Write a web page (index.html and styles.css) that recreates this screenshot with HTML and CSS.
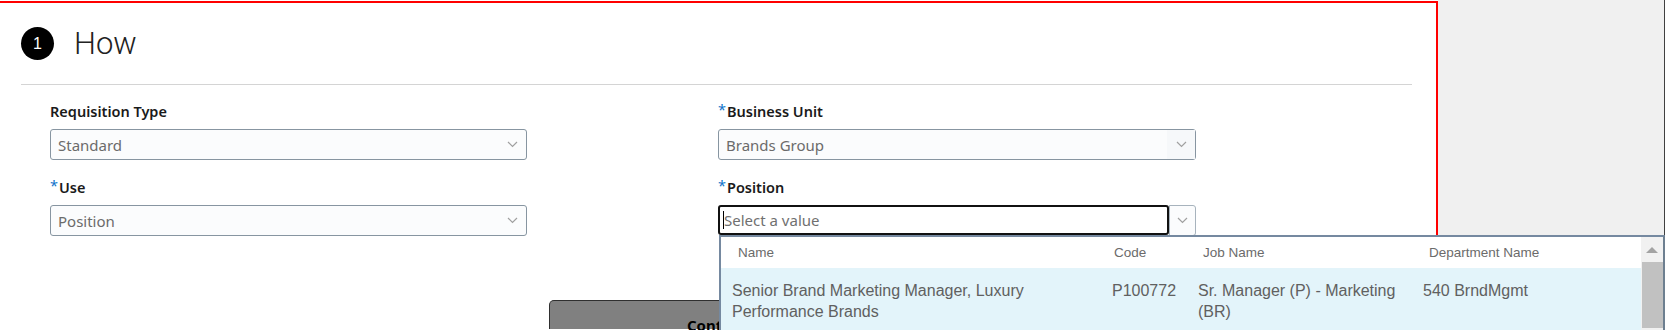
FILE: index.html
```html
<!DOCTYPE html>
<html>
<head>
<meta charset="utf-8">
<link rel="stylesheet" href="styles.css">
</head>
<body>
<div class="page">
  <div class="main">
    <div class="step-head">
      <span class="step-num">1</span>
      <h1 class="step-title">How</h1>
    </div>
    <hr class="rule">
    <div class="form">
      <div class="field">
        <div class="label">Requisition Type</div>
        <div class="select">
          <span class="value">Standard</span>
          <span class="chev"><svg width="11" height="7" viewBox="0 0 11 7"><path d="M1 1 L5.5 5.5 L10 1" fill="none" stroke="#a0a0a0" stroke-width="1.2"/></svg></span>
        </div>
      </div>
      <div class="field">
        <div class="label"><span class="req">*</span>Business Unit</div>
        <div class="select">
          <span class="value">Brands Group</span>
          <span class="chev chev-box"><svg width="11" height="7" viewBox="0 0 11 7"><path d="M1 1 L5.5 5.5 L10 1" fill="none" stroke="#a0a0a0" stroke-width="1.2"/></svg></span>
        </div>
      </div>
      <div class="field">
        <div class="label"><span class="req">*</span>Use</div>
        <div class="select">
          <span class="value">Position</span>
          <span class="chev"><svg width="11" height="7" viewBox="0 0 11 7"><path d="M1 1 L5.5 5.5 L10 1" fill="none" stroke="#a0a0a0" stroke-width="1.2"/></svg></span>
        </div>
      </div>
      <div class="field combo-field">
        <div class="label"><span class="req">*</span>Position</div>
        <div class="combo">
          <div class="combo-input"><span class="caret"></span><span class="placeholder">Select a value</span></div>
          <div class="combo-btn"><svg width="11" height="7" viewBox="0 0 11 7"><path d="M1 1 L5.5 5.5 L10 1" fill="none" stroke="#a0a0a0" stroke-width="1.2"/></svg></div>
        </div>
        <div class="popup">
          <div class="popup-body">
            <div class="grid-row head">
              <div class="cell">Name</div>
              <div class="cell">Code</div>
              <div class="cell">Job Name</div>
              <div class="cell">Department Name</div>
            </div>
            <div class="grid-row data">
              <div class="cell">Senior Brand Marketing Manager, Luxury Performance Brands</div>
              <div class="cell">P100772</div>
              <div class="cell">Sr. Manager (P) - Marketing (BR)</div>
              <div class="cell">540 BrndMgmt</div>
            </div>
          </div>
          <div class="scrollbar">
            <div class="sb-up"><svg width="14" height="8" viewBox="0 0 14 8"><path d="M1 7 L7 1 L13 7 Z" fill="#a3a3a3"/></svg></div>
            <div class="sb-thumb"></div>
          </div>
        </div>
      </div>
    </div>
    <div class="actions">
      <button class="btn">Continue</button>
    </div>
  </div>
  <div class="side"></div>
</div>
</body>
</html>
```

FILE: styles.css
```css
html, body {
  margin: 0;
  padding: 0;
  background: #ffffff;
}
body {
  width: 1665px;
  height: 330px;
  overflow: hidden;
  font-family: "Noto Sans", "Open Sans", sans-serif;
}
.page {
  display: flex;
  height: 330px;
  overflow: hidden;
}
.main {
  width: 1438px;
  box-sizing: border-box;
  margin-top: 1px;
  height: 329px;
  border-top: 2px solid #ff0000;
  border-right: 2px solid #ff0000;
  padding: 24px 24px 0 21px;
}
.side {
  flex: 1;
  background: #f0f0f0;
  border-right: 1px solid #404040;
}
.step-head {
  display: flex;
  align-items: center;
  height: 33px;
}
.step-num {
  width: 33px;
  height: 33px;
  border-radius: 50%;
  background: #000;
  color: #fff;
  display: flex;
  align-items: center;
  justify-content: center;
  font-family: "Liberation Sans", Arial, sans-serif;
  font-size: 16px;
}
.step-title {
  margin: 0 0 0 20px;
  font-family: Roboto, "Liberation Sans", sans-serif;
  font-weight: 300;
  font-size: 31px;
  color: #222;
  line-height: 33px;
}
.rule {
  margin: 24px 0 0 0;
  border: 0;
  border-top: 1px solid #d4d4d4;
  height: 0;
}
.form {
  display: grid;
  grid-template-columns: 477px 478px;
  column-gap: 191px;
  row-gap: 17px;
  margin: 16px 0 0 29px;
}
.field {
  display: flex;
  flex-direction: column;
}
.combo-field {
  position: relative;
}
.label {
  font-size: 14.5px;
  font-weight: 600;
  color: #1a1a1a;
  line-height: 20px;
  margin-bottom: 8px;
}
.req {
  color: #0d73c9;
  font-weight: 400;
  margin-right: 1px;
  position: relative;
  top: -2px;
}
.select {
  height: 31px;
  box-sizing: border-box;
  border: 1px solid #8795a1;
  border-radius: 3px;
  background: #fbfcfd;
  display: flex;
  align-items: center;
  justify-content: space-between;
  padding-left: 7px;
}
.value {
  font-size: 15px;
  color: #6b6b6b;
}
.chev {
  width: 28px;
  height: 29px;
  display: flex;
  align-items: center;
  justify-content: center;
}
.chev-box {
  background: #f6f8fa;
}
.combo {
  display: flex;
  height: 31px;
}
.combo-input {
  width: 451px;
  height: 30px;
  box-sizing: border-box;
  border: 2px solid #111;
  border-radius: 3px;
  display: flex;
  align-items: center;
  padding-left: 3px;
}
.caret {
  width: 1px;
  height: 18px;
  background: #000;
}
.placeholder {
  font-size: 15px;
  color: #707070;
}
.combo-btn {
  width: 27px;
  height: 31px;
  box-sizing: border-box;
  border: 1px solid #a7b3bd;
  border-radius: 0 3px 3px 0;
  background: #fbfcfd;
  display: flex;
  align-items: center;
  justify-content: center;
}
.popup {
  position: absolute;
  top: 58px;
  left: 1px;
  width: 946px;
  height: 96px;
  box-sizing: border-box;
  border-top: 2px solid #7589a0;
  border-left: 2px solid #7589a0;
  border-right: 2px solid #6d7f90;
  background: #fff;
  display: flex;
  overflow: hidden;
  z-index: 5;
}
.popup-body {
  flex: 1;
  font-family: "Liberation Sans", Arial, sans-serif;
}
.grid-row {
  display: grid;
  grid-template-columns: 380px 86px 225px 1fr;
  padding-left: 11px;
}
.head {
  height: 31px;
  align-items: center;
  font-size: 13.5px;
  color: #6b6b6b;
  background: #fff;
}
.head .cell {
  padding-left: 6px;
}
.head .cell:nth-child(2) {
  padding-left: 2px;
}
.head .cell:nth-child(3) {
  padding-left: 5px;
}
.data {
  background: #e3f4fa;
  font-size: 16px;
  line-height: 21px;
  color: #606060;
  padding-top: 12px;
  height: 63px;
  box-sizing: border-box;
  align-items: start;
}
.data .cell {
  padding-right: 12px;
}
.scrollbar {
  width: 22px;
  background: #f1f1f1;
  display: flex;
  flex-direction: column;
}
.sb-up {
  height: 25px;
  display: flex;
  align-items: center;
  justify-content: center;
}
.sb-thumb {
  margin: 0 0 0 1px;
  height: 66px;
  background: #c1c1c1;
}
.actions {
  margin: 64px 0 0 528px;
}
.btn {
  width: 344px;
  height: 29px;
  background: #808080;
  border: 1px solid #2f2f2f;
  border-bottom: 0;
  border-radius: 5px 5px 0 0;
  font-family: "Noto Sans", "Open Sans", sans-serif;
  font-weight: 700;
  font-size: 15px;
  color: #000;
  padding: 14px 0 0 0;
  line-height: 20px;
  text-align: center;
  vertical-align: top;
}
```
